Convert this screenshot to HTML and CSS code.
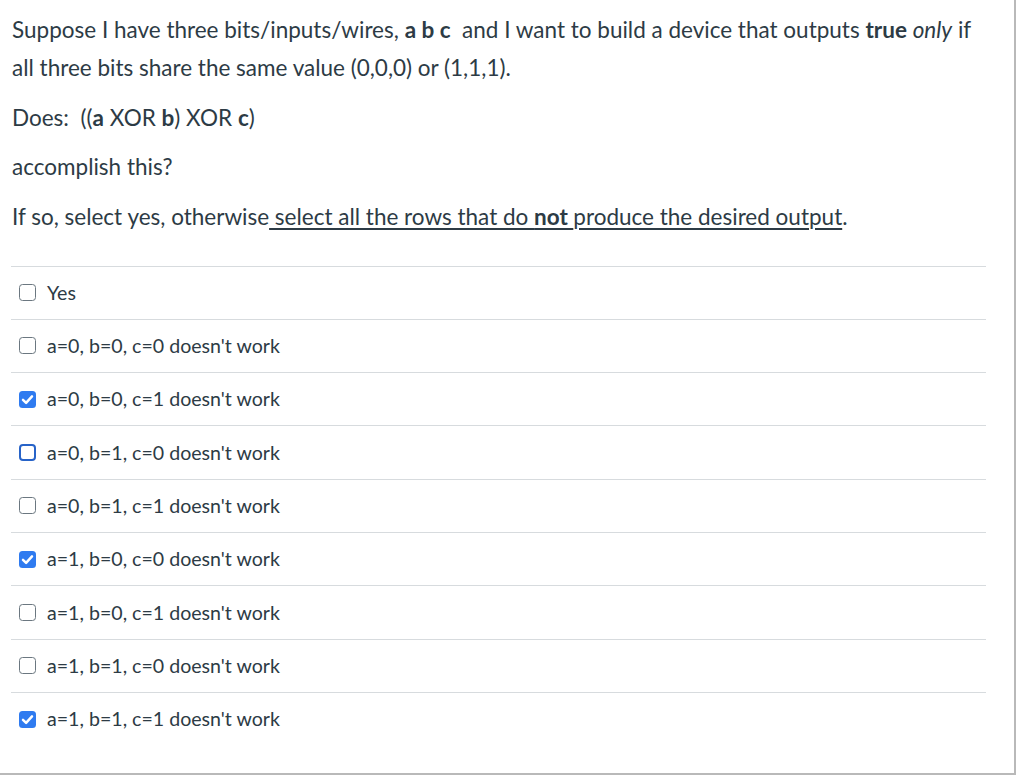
FILE: index.html
```html
<!DOCTYPE html>
<html>
<head>
<meta charset="utf-8">
<link rel="stylesheet" href="styles.css">
</head>
<body>
<div class="frame">
  <div class="question">
    <p>Suppose I have three bits/inputs/wires, <strong>a b c</strong>&nbsp; and I want to build a device that outputs <strong>true</strong> <em>only</em> if all three bits share the same value (0,0,0) or (1,1,1).</p>
    <p>Does:&nbsp; ((<strong>a</strong> XOR <strong>b</strong>) XOR <strong>c</strong>)</p>
    <p>accomplish this?</p>
    <p>If so, select yes, otherwise<u> select all the rows that do <strong>not </strong></u><u>produce the desired output</u>.</p>
  </div>
  <div class="answers">
    <label class="row"><span class="box"></span><span class="text">Yes</span></label>
    <label class="row"><span class="box"></span><span class="text">a=0, b=0, c=0 doesn't work</span></label>
    <label class="row"><span class="box checked"><svg viewBox="0 0 17 17" width="17" height="17"><path d="M4 8.8 L7.1 11.8 L13 5.4" fill="none" stroke="#fff" stroke-width="2.5" stroke-linecap="round" stroke-linejoin="round"/></svg></span><span class="text">a=0, b=0, c=1 doesn't work</span></label>
    <label class="row"><span class="box focus"></span><span class="text">a=0, b=1, c=0 doesn't work</span></label>
    <label class="row"><span class="box"></span><span class="text">a=0, b=1, c=1 doesn't work</span></label>
    <label class="row"><span class="box checked"><svg viewBox="0 0 17 17" width="17" height="17"><path d="M4 8.8 L7.1 11.8 L13 5.4" fill="none" stroke="#fff" stroke-width="2.5" stroke-linecap="round" stroke-linejoin="round"/></svg></span><span class="text">a=1, b=0, c=0 doesn't work</span></label>
    <label class="row"><span class="box"></span><span class="text">a=1, b=0, c=1 doesn't work</span></label>
    <label class="row"><span class="box"></span><span class="text">a=1, b=1, c=0 doesn't work</span></label>
    <label class="row"><span class="box checked"><svg viewBox="0 0 17 17" width="17" height="17"><path d="M4 8.8 L7.1 11.8 L13 5.4" fill="none" stroke="#fff" stroke-width="2.5" stroke-linecap="round" stroke-linejoin="round"/></svg></span><span class="text">a=1, b=1, c=1 doesn't work</span></label>
  </div>
</div>
</body>
</html>
```
FILE: styles.css
```css
html, body {
  margin: 0;
  padding: 0;
  background: #fff;
}
body {
  font-family: Lato, "Open Sans", sans-serif;
  color: #2d3b45;
}
.frame {
  box-sizing: border-box;
  width: 1016px;
  height: 775px;
  border-right: 2px solid #b9b9b9;
  border-bottom: 2px solid #b9b9b9;
  overflow: hidden;
}
.question {
  padding: 11px 30px 0 12px;
  font-size: 22.5px;
  line-height: 38px;
}
.question p {
  margin: 0 0 11.5px 0;
}
.question strong {
  font-weight: 700;
}
.question u {
  text-decoration-thickness: 2px;
  text-underline-offset: 3px;
}
.answers {
  margin: 30px 0 0 11px;
  width: 975px;
}
.row {
  display: flex;
  align-items: center;
  height: 52.33px;
  border-top: 1px solid #d7dbde;
  font-size: 19.6px;
}
.box {
  box-sizing: border-box;
  width: 17px;
  height: 17px;
  margin-left: 8px;
  margin-right: 11px;
  border: 1.5px solid #6b7780;
  border-radius: 3.5px;
  display: flex;
  align-items: center;
  justify-content: center;
  flex-shrink: 0;
}
.box.checked {
  background: #2f7bf0;
  border: none;
}
.box.checked svg {
  display: block;
}
.box.focus {
  border: 2.6px solid #2763c8;
  border-radius: 4px;
}
.text {
  line-height: 20px;
}
```
